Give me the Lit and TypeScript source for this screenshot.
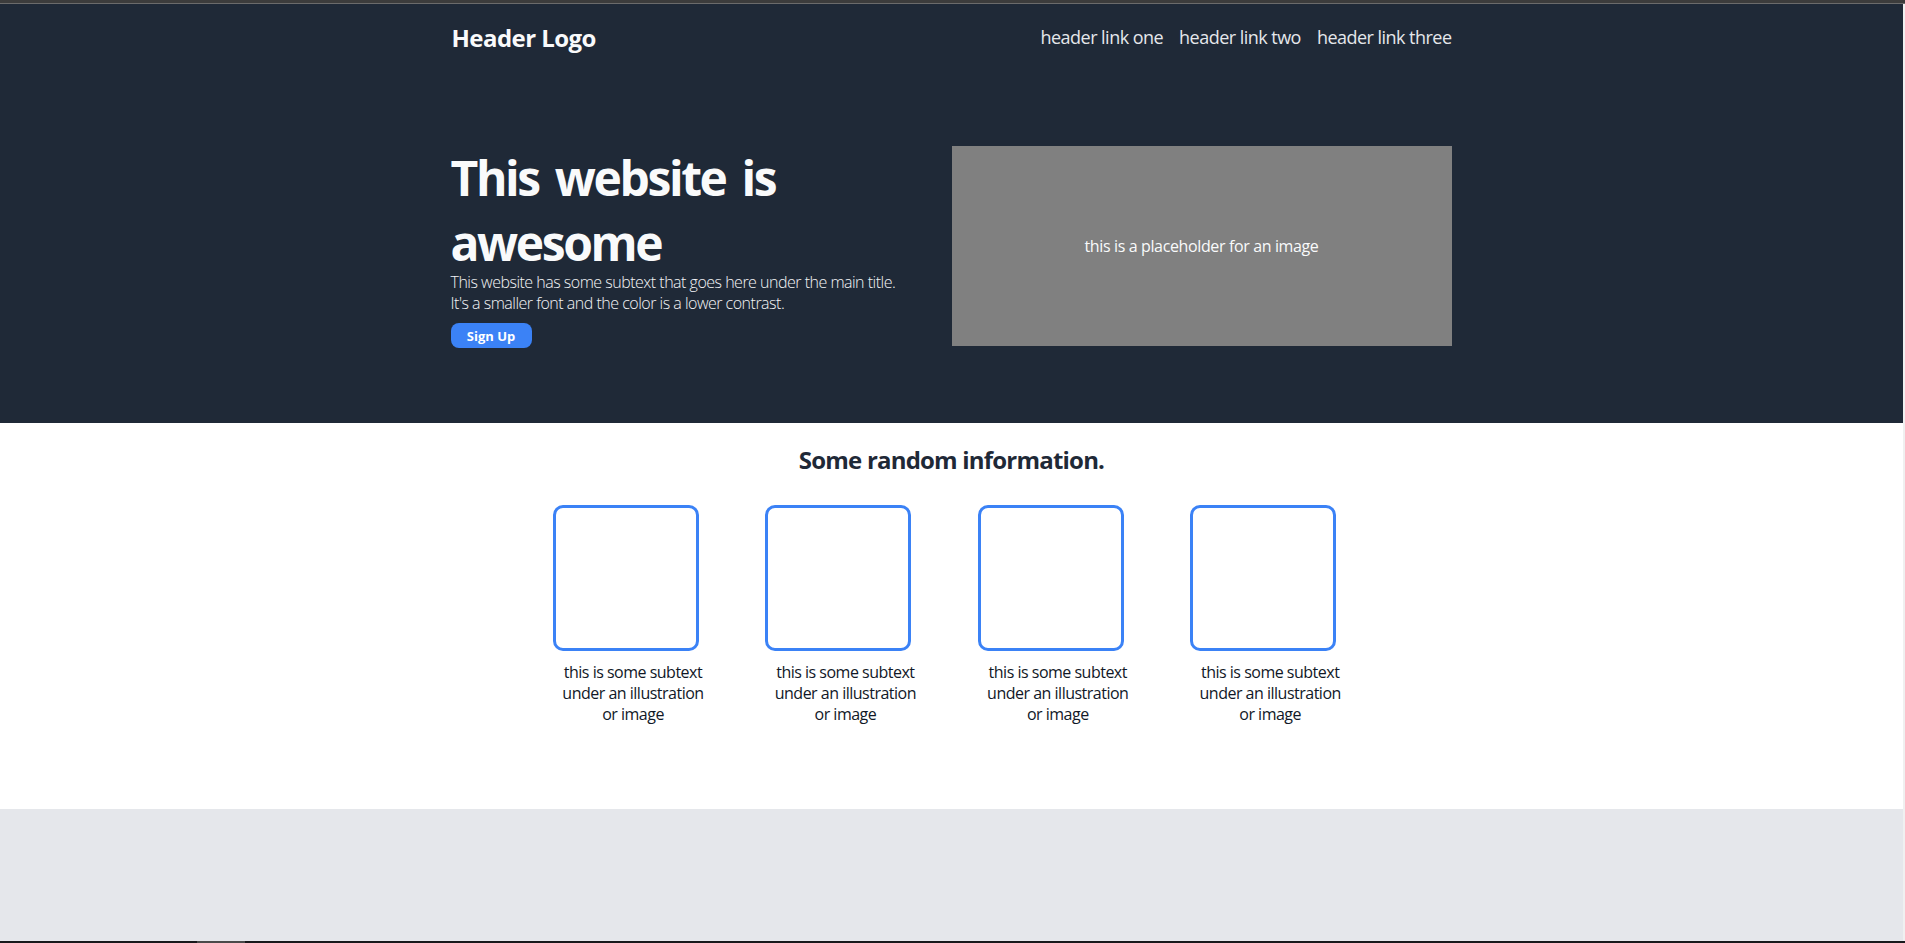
import { LitElement, html, css } from "lit";
import { customElement } from "lit/decorators.js";

const FEATURES = [1, 2, 3, 4];

@customElement("app-root")
export class AppRoot extends LitElement {
  static styles = css`
    :host {
      display: flex;
      flex-direction: column;
      height: 943px;
      overflow: hidden;
      font-family: "Open Sans", "Noto Sans", sans-serif;
      color: #1f2937;
      background: #e5e7eb;
    }

    .chrome-top {
      height: 3px;
      flex: none;
      background: #3c3c3c;
      border-bottom: 1px solid #6b6b6b;
    }

    .chrome-bottom {
      height: 2px;
      flex: none;
      background: #18181b;
      padding-left: 197px;
    }

    .thumb {
      width: 48px;
      height: 100%;
      background: #4a4a4a;
    }

    .page {
      flex: 1;
      display: flex;
      min-height: 0;
    }

    .content {
      flex: 1;
      min-width: 0;
    }

    .scrollbar {
      width: 2px;
      background: #f0f0f0;
    }

    .hero {
      height: 419px;
      background: #1f2937;
      box-sizing: border-box;
      padding-top: 20px;
    }

    .wrap {
      width: 1000px;
      margin: 0 auto;
    }

    .top {
      display: flex;
      justify-content: space-between;
      align-items: center;
      height: 26px;
    }

    .logo {
      font-size: 24px;
      font-weight: 700;
      color: #f9fafb;
      letter-spacing: -0.55px;
    }

    .links {
      display: flex;
      gap: 16px;
      font-size: 18px;
      color: #e5e7eb;
      letter-spacing: -0.53px;
    }

    .intro {
      display: flex;
      justify-content: space-between;
      margin-top: 96px;
    }

    .copy {
      width: 450px;
      margin-left: -1px;
    }

    h1 {
      margin: -1px 0 -3px;
      font-size: 48px;
      line-height: 65px;
      font-weight: 700;
      color: #f9fafb;
      letter-spacing: -2.4px;
      word-spacing: 6px;
    }

    .sub {
      margin: 0;
      font-size: 16px;
      line-height: 21px;
      font-weight: 300;
      color: #f3f4f6;
      letter-spacing: -0.5px;
    }

    .signup {
      display: block;
      width: 81px;
      height: 25px;
      margin-top: 9px;
      padding: 0;
      border: 0;
      border-radius: 8px;
      background: #3b82f6;
      color: #fff;
      font: 700 13px "Open Sans", sans-serif;
    }

    .image {
      width: 500px;
      height: 200px;
      display: flex;
      align-items: center;
      justify-content: center;
      background: #808080;
      color: #f9fafb;
      font-size: 16px;
      letter-spacing: -0.37px;
    }

    .info {
      height: 386px;
      background: #fff;
      box-sizing: border-box;
      padding-top: 21px;
    }

    h2 {
      margin: 0;
      text-align: center;
      font-size: 24px;
      line-height: 32px;
      font-weight: 700;
      letter-spacing: -0.8px;
    }

    .features {
      display: flex;
      gap: 52.4px;
      margin: 29px 0 0 553px;
    }

    .feature {
      width: 160px;
    }

    .box {
      width: 146px;
      height: 146px;
      box-sizing: border-box;
      border: 3px solid #3b82f6;
      border-radius: 10px;
    }

    .caption {
      margin: 11px 0 0;
      text-align: center;
      font-size: 16px;
      line-height: 21px;
      color: #111827;
      letter-spacing: -0.5px;
    }

    .footer {
      height: 132px;
    }
  `;

  render() {
    return html`
      <div class="chrome-top"></div>
      <div class="page">
        <div class="content">
          <section class="hero">
            <div class="wrap">
              <header class="top">
                <div class="logo">Header Logo</div>
                <nav class="links">
                  <span>header link one</span>
                  <span>header link two</span>
                  <span>header link three</span>
                </nav>
              </header>
              <div class="intro">
                <div class="copy">
                  <h1>This website is awesome</h1>
                  <p class="sub">
                    This website has some subtext that goes here under the main title.
                    It's a smaller font and the color is a lower contrast.
                  </p>
                  <button class="signup">Sign Up</button>
                </div>
                <div class="image">this is a placeholder for an image</div>
              </div>
            </div>
          </section>
          <section class="info">
            <h2>Some random information.</h2>
            <div class="features">
              ${FEATURES.map(
                () => html`
                  <div class="feature">
                    <div class="box"></div>
                    <p class="caption">this is some subtext under an illustration or image</p>
                  </div>
                `
              )}
            </div>
          </section>
          <div class="footer"></div>
        </div>
        <div class="scrollbar"></div>
      </div>
      <div class="chrome-bottom"><div class="thumb"></div></div>
    `;
  }
}
